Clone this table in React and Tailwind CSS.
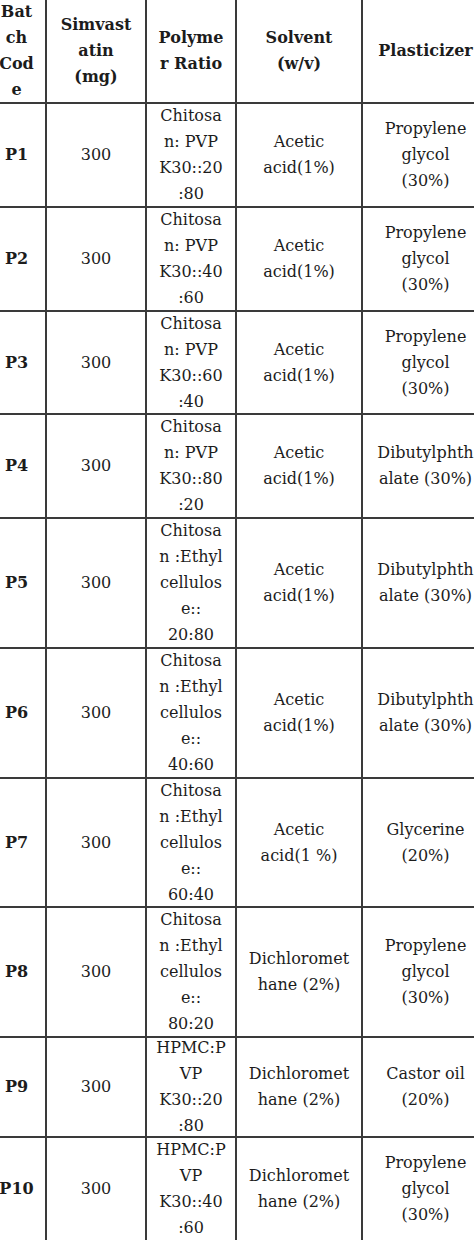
import React from 'react';

const cols = ['w-[59px]', 'w-[100px]', 'w-[90px]', 'w-[126px]', 'w-[127px]'];

const header = [
  ['Bat', 'ch', 'Cod', 'e'],
  ['Simvast', 'atin', '(mg)'],
  ['Polyme', 'r Ratio'],
  ['Solvent', '(w/v)'],
  ['Plasticizer'],
];

const acetic = ['Acetic', 'acid(1%)'];
const dcm = ['Dichloromet', 'hane (2%)'];
const pg = ['Propylene', 'glycol', '(30%)'];
const dbp = ['Dibutylphth', 'alate (30%)'];

const rows = [
  { h: 'h-[104px]', code: 'P1', ratio: ['Chitosa', 'n: PVP', 'K30::20', ':80'], solvent: acetic, plast: pg },
  { h: 'h-[104px]', code: 'P2', ratio: ['Chitosa', 'n: PVP', 'K30::40', ':60'], solvent: acetic, plast: pg },
  { h: 'h-[103px]', code: 'P3', ratio: ['Chitosa', 'n: PVP', 'K30::60', ':40'], solvent: acetic, plast: pg },
  { h: 'h-[104px]', code: 'P4', ratio: ['Chitosa', 'n: PVP', 'K30::80', ':20'], solvent: acetic, plast: dbp },
  { h: 'h-[130px]', code: 'P5', ratio: ['Chitosa', 'n :Ethyl', 'cellulos', 'e::', '20:80'], solvent: acetic, plast: dbp },
  { h: 'h-[130px]', code: 'P6', ratio: ['Chitosa', 'n :Ethyl', 'cellulos', 'e::', '40:60'], solvent: acetic, plast: dbp },
  { h: 'h-[129px]', code: 'P7', ratio: ['Chitosa', 'n :Ethyl', 'cellulos', 'e::', '60:40'], solvent: ['Acetic', 'acid(1 %)'], plast: ['Glycerine', '(20%)'] },
  { h: 'h-[130px]', code: 'P8', ratio: ['Chitosa', 'n :Ethyl', 'cellulos', 'e::', '80:20'], solvent: dcm, plast: pg },
  { h: 'h-[100px]', code: 'P9', ratio: ['HPMC:P', 'VP', 'K30::20', ':80'], solvent: dcm, plast: ['Castor oil', '(20%)'] },
  { h: 'h-[104px]', code: 'P10', ratio: ['HPMC:P', 'VP', 'K30::40', ':60'], solvent: dcm, plast: pg },
];

function Cell({ lines, w, bold }) {
  return (
    <div className={`${w} shrink-0 flex flex-col items-center justify-center border-r-2 border-[#3a3a3a] text-center ${bold ? 'font-bold' : ''}`}>
      {lines.map((l, i) => (
        <span key={i} className="whitespace-nowrap leading-[26px]">{l}</span>
      ))}
    </div>
  );
}

export default function App() {
  return (
    <div className="w-[474px] h-[1240px] overflow-hidden bg-white text-[#1c1c1c] text-[16px] font-['DejaVu_Serif',serif]">
      <div className="-ml-[12px] w-[502px]">
        <div className="flex h-[104px] border-b-2 border-[#3a3a3a]">
          {header.map((lines, i) => (
            <Cell key={i} lines={lines} w={cols[i]} bold />
          ))}
        </div>
        {rows.map((r) => (
          <div key={r.code} className={`flex ${r.h} border-b-2 border-[#3a3a3a]`}>
            <Cell lines={[r.code]} w={cols[0]} bold />
            <Cell lines={['300']} w={cols[1]} />
            <Cell lines={r.ratio} w={cols[2]} />
            <Cell lines={r.solvent} w={cols[3]} />
            <Cell lines={r.plast} w={cols[4]} />
          </div>
        ))}
      </div>
    </div>
  );
}
